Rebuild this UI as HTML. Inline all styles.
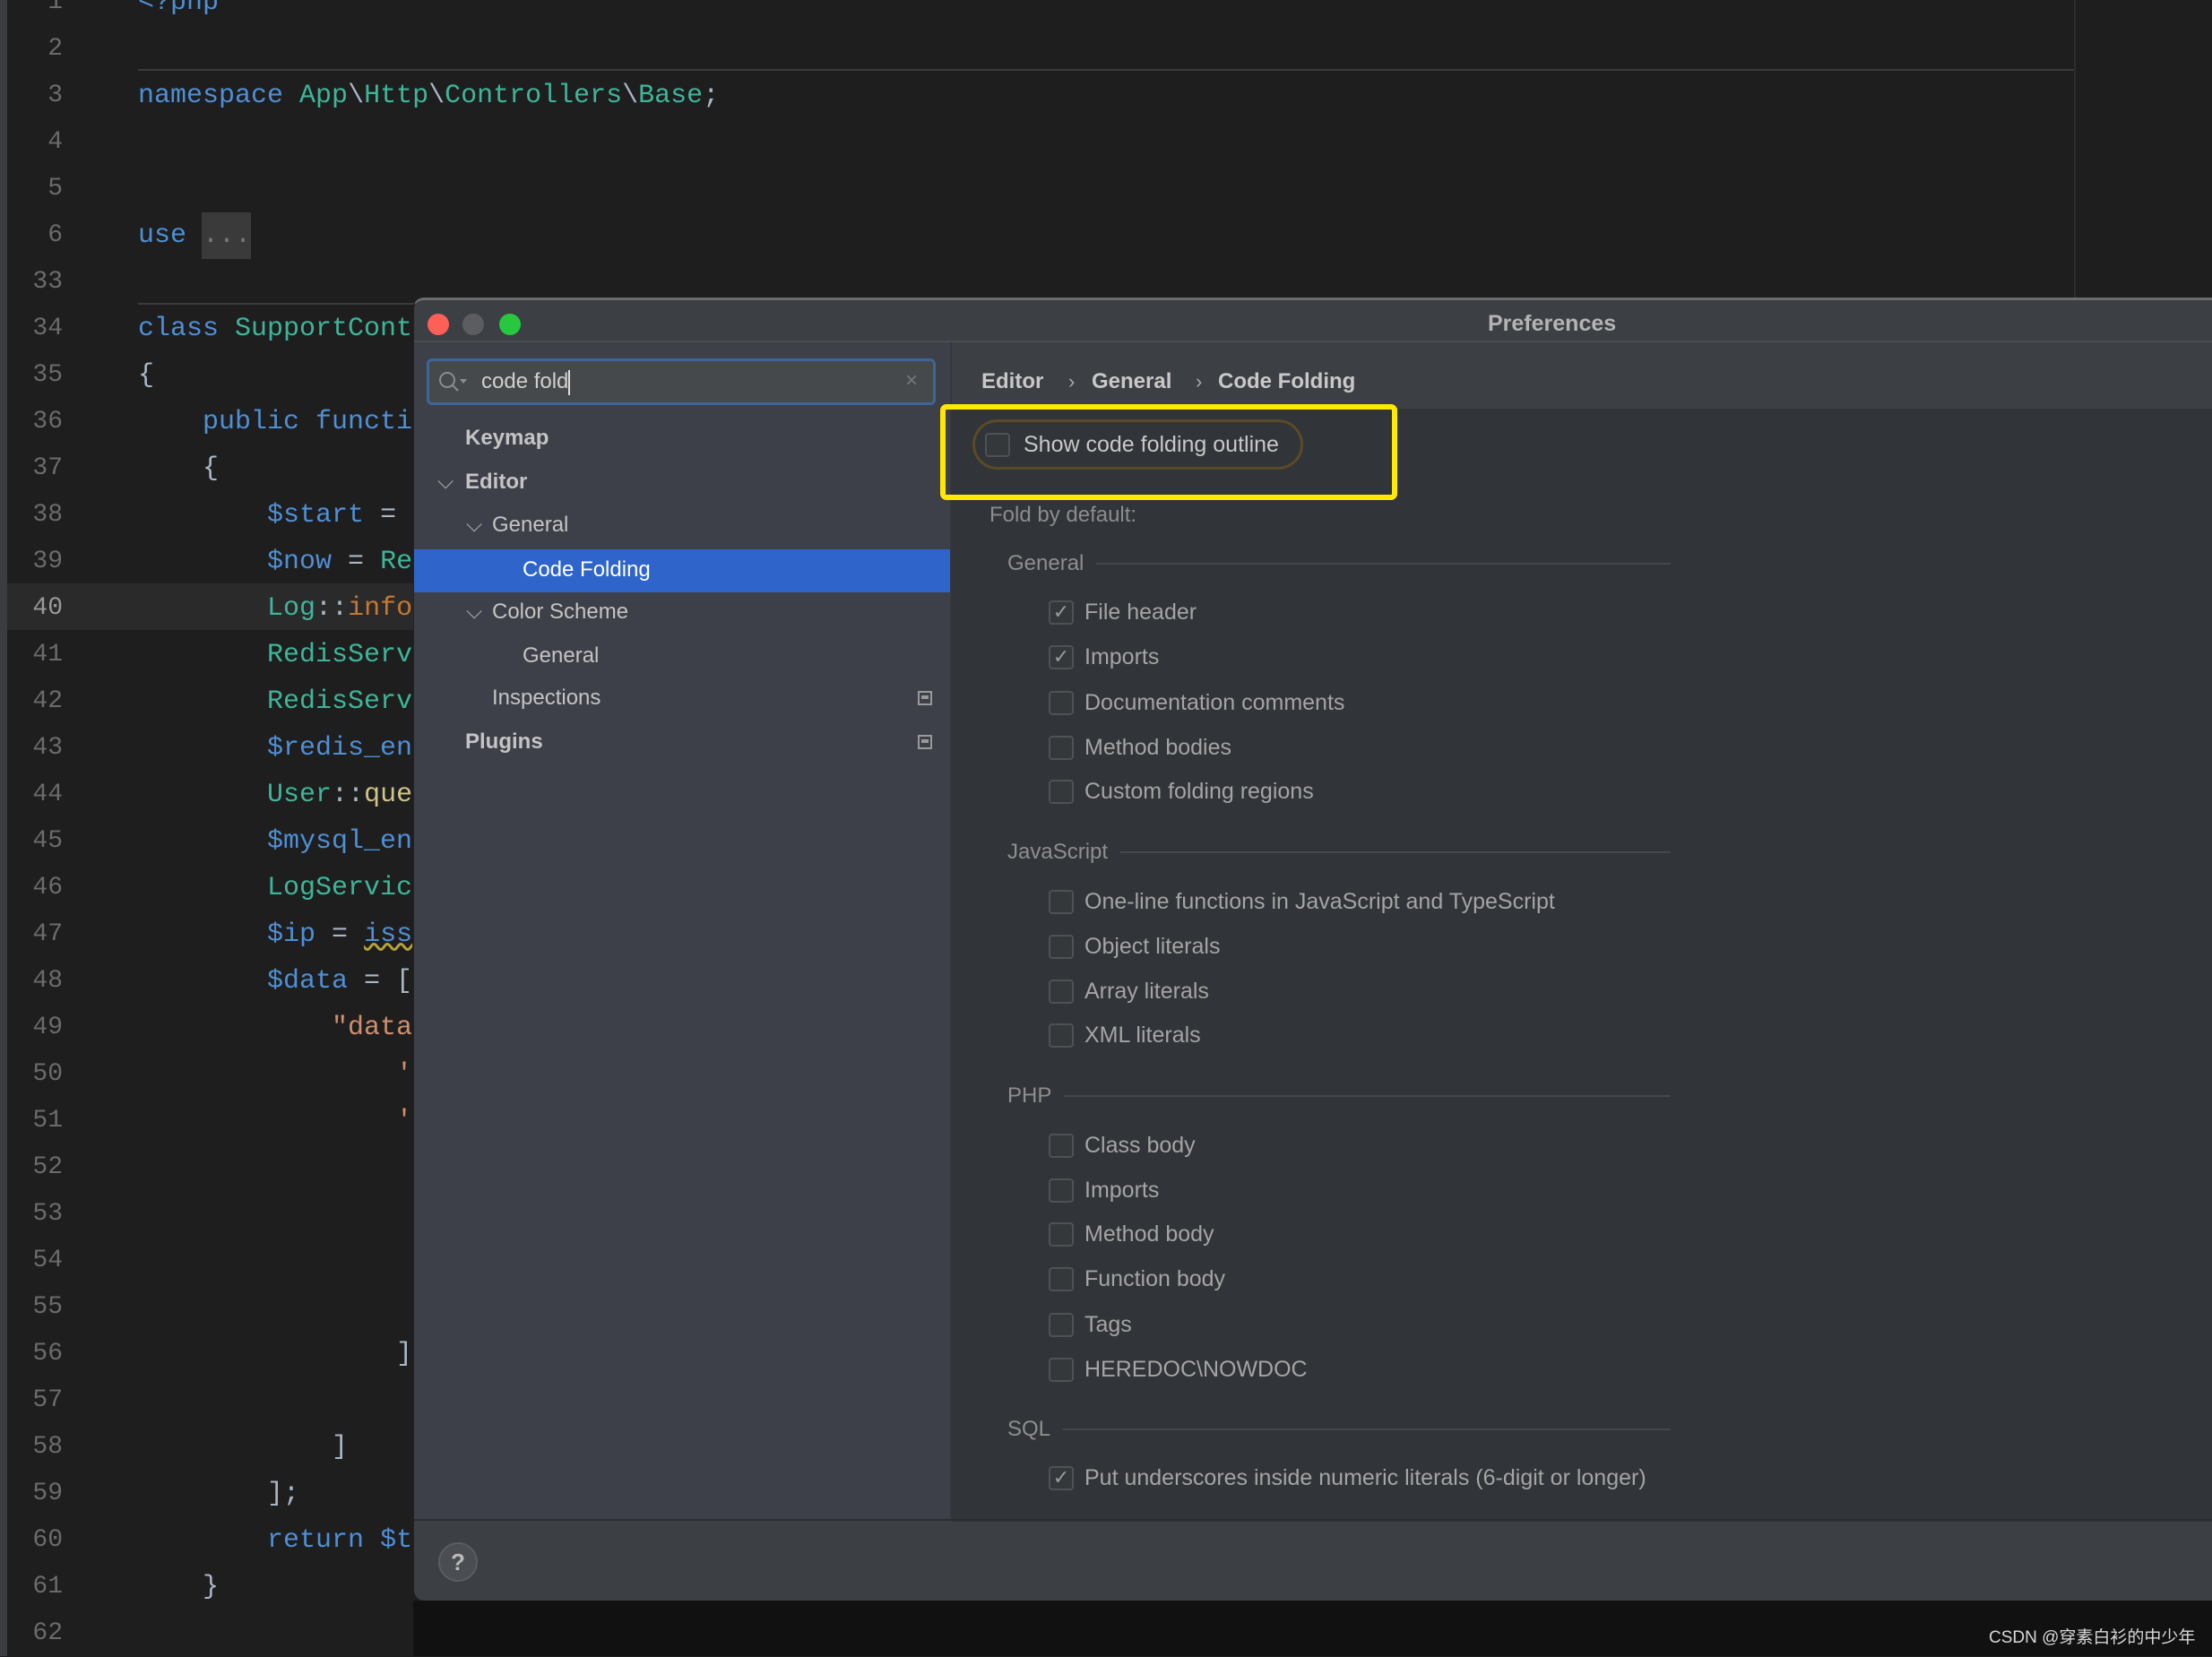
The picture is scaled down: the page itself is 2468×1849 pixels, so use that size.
<!DOCTYPE html>
<html><head><meta charset="utf-8"><style>
*{margin:0;padding:0;box-sizing:border-box}
body{width:2468px;height:1848px;background:#1e1e1e;overflow:hidden;position:relative;font-family:"Liberation Sans",sans-serif}
.strip{position:absolute;left:0;top:0;width:8px;height:1848px;background:#3a3c40}
.ln{position:absolute;left:8px;width:62px;text-align:right;font:28px/52px "Liberation Mono",monospace;color:#6b6b6b;height:52px;margin-top:3px}
.cd{position:absolute;left:154px;font:30px/52px "Liberation Mono",monospace;color:#a9b7c6;white-space:pre;height:52px;margin-top:3px}
.k{color:#4e8fd6}.t{color:#3eb59a}.o{color:#c47833}.y{color:#cfc58b}.s{color:#cf8e6d}
.dlg{position:absolute;left:461px;top:332px;width:2020px;height:1454px;background:#3c3f43;border-top-left-radius:12px;border-bottom-left-radius:12px;border-top:3px solid #6a6d70;border-left:1px solid #222;overflow:hidden;z-index:5}
.ab{position:absolute}
.tl{position:absolute;top:15px;width:24px;height:24px;border-radius:50%}
.tree{position:absolute;font-size:24px;color:#c4c4c4;height:48px;line-height:48px}
.b{font-weight:bold}
.cb{position:absolute;left:708px;width:28px;height:27px;border:2px solid #4f5255;border-radius:4px;background:#35383b;color:#9a9a9a;font-size:22px;line-height:22px;text-align:center}
.lb{position:absolute;left:748px;font-size:25px;color:#a4a4a4;line-height:30px}
.gh{position:absolute;left:662px;font-size:24px;color:#8e8e8e;line-height:30px;display:flex;align-items:center;width:740px}
.gh span{flex:1;height:2px;background:#45484b;margin-left:14px}
</style></head><body>
<div class="strip"></div>
<div class="ab" style="left:8px;top:651px;width:2460px;height:52px;background:#2a2a2b"></div>
<div class="ab" style="left:154px;top:77px;width:2161px;height:2px;background:#3b3b3b"></div>
<div class="ab" style="left:154px;top:338px;width:2161px;height:2px;background:#3b3b3b"></div>
<div class="ab" style="left:2314px;top:0;width:2px;height:340px;background:#2c2c2c"></div>
<div class="ab" style="left:225px;top:237px;width:55px;height:52px;background:#3a3a3a"></div>

<div class="ln" style="top:-26px">1</div><div class="cd" style="top:-26px"><span class="k">&lt;?php</span></div>
<div class="ln" style="top:26px">2</div>
<div class="ln" style="top:78px">3</div><div class="cd" style="top:78px"><span class="k">namespace</span> <span class="t">App</span>\<span class="t">Http</span>\<span class="t">Controllers</span>\<span class="t">Base</span>;</div>
<div class="ln" style="top:130px">4</div>
<div class="ln" style="top:182px">5</div>
<div class="ln" style="top:234px">6</div><div class="cd" style="top:234px"><span class="k">use</span> <span style="color:#777">...</span></div>
<div class="ln" style="top:286px">33</div>
<div class="ln" style="top:338px">34</div><div class="cd" style="top:338px"><span class="k">class</span> <span class="t">SupportController</span></div>
<div class="ln" style="top:390px">35</div><div class="cd" style="top:390px">{</div>
<div class="ln" style="top:442px">36</div><div class="cd" style="top:442px">    <span class="k">public function</span></div>
<div class="ln" style="top:494px">37</div><div class="cd" style="top:494px">    {</div>
<div class="ln" style="top:546px">38</div><div class="cd" style="top:546px">        <span class="k">$start</span> = </div>
<div class="ln" style="top:598px">39</div><div class="cd" style="top:598px">        <span class="k">$now</span> = <span class="t">Re</span></div>
<div class="ln" style="top:650px;color:#999">40</div><div class="cd" style="top:650px">        <span class="t">Log</span>::<span class="o">info</span></div>
<div class="ln" style="top:702px">41</div><div class="cd" style="top:702px">        <span class="t">RedisServ</span></div>
<div class="ln" style="top:754px">42</div><div class="cd" style="top:754px">        <span class="t">RedisServ</span></div>
<div class="ln" style="top:806px">43</div><div class="cd" style="top:806px">        <span class="k">$redis_en</span></div>
<div class="ln" style="top:858px">44</div><div class="cd" style="top:858px">        <span class="t">User</span>::<span class="y">que</span></div>
<div class="ln" style="top:910px">45</div><div class="cd" style="top:910px">        <span class="k">$mysql_en</span></div>
<div class="ln" style="top:962px">46</div><div class="cd" style="top:962px">        <span class="t">LogServic</span></div>
<div class="ln" style="top:1014px">47</div><div class="cd" style="top:1014px">        <span class="k">$ip</span> = <span class="k" style="text-decoration:underline wavy #b5a13a">iss</span></div>
<div class="ln" style="top:1066px">48</div><div class="cd" style="top:1066px">        <span class="k">$data</span> = [</div>
<div class="ln" style="top:1118px">49</div><div class="cd" style="top:1118px">            <span class="s">"data</span></div>
<div class="ln" style="top:1170px">50</div><div class="cd" style="top:1170px">                <span class="s">'</span></div>
<div class="ln" style="top:1222px">51</div><div class="cd" style="top:1222px">                <span class="s">'</span></div>
<div class="ln" style="top:1274px">52</div>
<div class="ln" style="top:1326px">53</div>
<div class="ln" style="top:1378px">54</div>
<div class="ln" style="top:1430px">55</div>
<div class="ln" style="top:1482px">56</div><div class="cd" style="top:1482px">                ]</div>
<div class="ln" style="top:1534px">57</div>
<div class="ln" style="top:1586px">58</div><div class="cd" style="top:1586px">            ]</div>
<div class="ln" style="top:1638px">59</div><div class="cd" style="top:1638px">        ];</div>
<div class="ln" style="top:1690px">60</div><div class="cd" style="top:1690px">        <span class="k">return</span> <span class="k">$t</span></div>
<div class="ln" style="top:1742px">61</div><div class="cd" style="top:1742px">    }</div>
<div class="ln" style="top:1794px">62</div>
<div class="ab" style="left:461px;top:1786px;width:2007px;height:62px;background:#111"></div>
<div class="ab" style="left:2219px;top:1812px;font-size:19px;color:#d8d8d8;font-family:'Liberation Sans','Noto Sans CJK SC',sans-serif;z-index:6">CSDN @穿素白衫的中少年</div>

<div class="dlg">
  <div class="tl" style="left:15px;background:#fe5f57"></div>
  <div class="tl" style="left:54px;background:#5b5d60"></div>
  <div class="tl" style="left:95px;background:#27c840"></div>
  <div class="ab" style="left:1198px;top:12px;font-size:25px;font-weight:bold;color:#b4b4b4">Preferences</div>
  <div class="ab" style="left:0;top:45px;width:2020px;height:2px;background:#4a4d50"></div>
  <div class="ab" style="left:0;top:47px;width:598px;height:1313px;background:#3d4048"></div>
  <div class="ab" style="left:598px;top:47px;width:2px;height:1313px;background:#35373b"></div>
  <div class="ab" style="left:14px;top:65px;width:568px;height:52px;border:3px solid #3d6696;border-radius:6px;background:#46494b"></div>
  <svg class="ab" style="left:26px;top:78px" width="36" height="28"><circle cx="11" cy="11" r="8" fill="none" stroke="#8a8d90" stroke-width="2"/><line x1="17" y1="17" x2="23" y2="23" stroke="#8a8d90" stroke-width="2"/><path d="M25 10h8l-4 5z" fill="#8a8d90"/></svg>
  <div class="ab" style="left:75px;top:74px;font-size:24px;line-height:34px;color:#cfcfcf">code fold<span style="display:inline-block;width:2px;height:28px;background:#ddd;vertical-align:middle"></span></div>
  <div class="ab" style="left:548px;top:76px;font-size:24px;color:#777">×</div>
  <div class="ab" style="left:0;top:278px;width:598px;height:48px;background:#2f65ca"></div>
  <div class="tree b" style="left:57px;top:130px">Keymap</div>
  <div class="tree" style="left:26px;top:179px;color:#aaa">⌵</div><div class="tree b" style="left:57px;top:179px">Editor</div>
  <div class="tree" style="left:58px;top:227px;color:#aaa">⌵</div><div class="tree" style="left:87px;top:227px">General</div>
  <div class="tree" style="left:121px;top:277px;color:#fff">Code Folding</div>
  <div class="tree" style="left:58px;top:324px;color:#aaa">⌵</div><div class="tree" style="left:87px;top:324px">Color Scheme</div>
  <div class="tree" style="left:121px;top:373px">General</div>
  <div class="tree" style="left:87px;top:420px">Inspections</div>
  <div class="tree b" style="left:57px;top:469px">Plugins</div>
  <div class="ab" style="left:562px;top:436px;width:16px;height:16px;border:2px solid #999;background:#3d4048"><div style="margin:3px 2px;height:4px;background:#999"></div></div>
  <div class="ab" style="left:562px;top:485px;width:16px;height:16px;border:2px solid #999;background:#3d4048"><div style="margin:3px 2px;height:4px;background:#999"></div></div>
  <div class="ab" style="left:600px;top:121px;width:1420px;height:1242px;background:#313438"></div>
  <div class="ab" style="left:633px;top:75px;font-size:24px;font-weight:bold;color:#c8c8c8;line-height:32px">Editor</div>
  <div class="ab" style="left:730px;top:75px;font-size:22px;color:#aaa;line-height:32px">›</div>
  <div class="ab" style="left:756px;top:75px;font-size:24px;font-weight:bold;color:#c8c8c8;line-height:32px">General</div>
  <div class="ab" style="left:872px;top:75px;font-size:22px;color:#aaa;line-height:32px">›</div>
  <div class="ab" style="left:897px;top:75px;font-size:24px;font-weight:bold;color:#c8c8c8;line-height:32px">Code Folding</div>
  <div class="ab" style="left:587px;top:116px;width:510px;height:107px;border:6px solid #ffe800;border-radius:7px"></div>
  <div class="ab" style="left:623px;top:133px;width:369px;height:56px;border:3px solid #5b4a28;border-radius:28px"></div>
  <div class="cb" style="left:637px;top:148px"></div>
  <div class="lb" style="left:680px;top:146px;color:#c8c8c8">Show code folding outline</div>
  <div class="lb" style="left:642px;top:225px;color:#8c8c8c;font-size:24px">Fold by default:</div>
  <div class="gh" style="top:279px">General<span></span></div>
  <div class="cb" style="top:335px">✓</div><div class="lb" style="top:333px">File header</div>
  <div class="cb" style="top:385px">✓</div><div class="lb" style="top:383px">Imports</div>
  <div class="cb" style="top:436px"></div><div class="lb" style="top:434px">Documentation comments</div>
  <div class="cb" style="top:486px"></div><div class="lb" style="top:484px">Method bodies</div>
  <div class="cb" style="top:535px"></div><div class="lb" style="top:533px">Custom folding regions</div>
  <div class="gh" style="top:601px">JavaScript<span></span></div>
  <div class="cb" style="top:658px"></div><div class="lb" style="top:656px">One-line functions in JavaScript and TypeScript</div>
  <div class="cb" style="top:708px"></div><div class="lb" style="top:706px">Object literals</div>
  <div class="cb" style="top:758px"></div><div class="lb" style="top:756px">Array literals</div>
  <div class="cb" style="top:807px"></div><div class="lb" style="top:805px">XML literals</div>
  <div class="gh" style="top:873px">PHP<span></span></div>
  <div class="cb" style="top:930px"></div><div class="lb" style="top:928px">Class body</div>
  <div class="cb" style="top:980px"></div><div class="lb" style="top:978px">Imports</div>
  <div class="cb" style="top:1029px"></div><div class="lb" style="top:1027px">Method body</div>
  <div class="cb" style="top:1079px"></div><div class="lb" style="top:1077px">Function body</div>
  <div class="cb" style="top:1130px"></div><div class="lb" style="top:1128px">Tags</div>
  <div class="cb" style="top:1180px"></div><div class="lb" style="top:1178px">HEREDOC\NOWDOC</div>
  <div class="gh" style="top:1245px">SQL<span></span></div>
  <div class="cb" style="top:1301px">✓</div><div class="lb" style="top:1299px">Put underscores inside numeric literals (6-digit or longer)</div>
  <div class="ab" style="left:0;top:1360px;width:2020px;height:2px;background:#2b2d30"></div>
  <div class="ab" style="left:27px;top:1386px;width:44px;height:44px;border-radius:50%;background:#4a4d51;border:2px solid #5a5d60;color:#bbb;font-size:26px;font-weight:bold;text-align:center;line-height:40px">?</div>
</div>
</body></html>
